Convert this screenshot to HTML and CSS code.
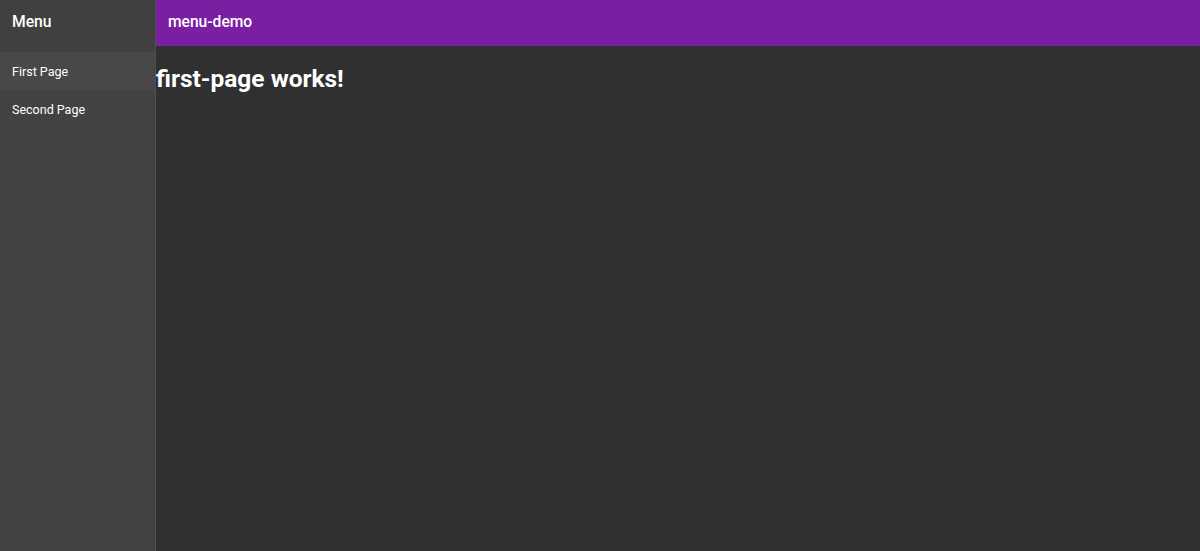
FILE: index.html
```html
<!DOCTYPE html>
<html>
<head>
<meta charset="utf-8">
<link rel="stylesheet" href="styles.css">
</head>
<body>
<div class="layout">
  <aside class="sidenav">
    <div class="sidenav-title">Menu</div>
    <nav class="nav-list">
      <a class="nav-item active">First Page</a>
      <a class="nav-item">Second Page</a>
    </nav>
  </aside>
  <div class="main">
    <header class="toolbar">menu-demo</header>
    <section class="content">
      <h1 class="page-title">first-page works!</h1>
    </section>
  </div>
</div>
</body>
</html>
```
FILE: styles.css
```css
html, body {
  margin: 0;
  height: 100%;
  font-family: Roboto, "Helvetica Neue", sans-serif;
  background: #303030;
  color: #fff;
}
.layout {
  display: flex;
  height: 100%;
}
.sidenav {
  width: 155px;
  flex: none;
  background: #424242;
  border-right: 1px solid #4f4f4f;
  display: flex;
  flex-direction: column;
}
.sidenav-title {
  height: 52px;
  box-sizing: border-box;
  padding: 13px 12px 0;
  font-size: 15.7px;
  font-weight: 500;
  line-height: 18px;
  background: #404040;
}
.nav-list {
  display: flex;
  flex-direction: column;
}
.nav-item {
  height: 38px;
  display: flex;
  align-items: center;
  padding: 0 12px;
  font-size: 12.5px;
  color: #fff;
}
.nav-item.active {
  background: #484848;
}
.main {
  flex: 1;
  display: flex;
  flex-direction: column;
}
.toolbar {
  height: 46px;
  background: #7b1fa2;
  display: flex;
  align-items: center;
  padding: 0 12px;
  font-size: 15.6px;
  font-weight: 500;
  padding-bottom: 3px;
  box-sizing: border-box;
}
.content {
  flex: 1;
}
.page-title {
  margin: 18px 0 0;
  font-size: 24.5px;
  font-weight: 700;
  line-height: 30px;
}
```
